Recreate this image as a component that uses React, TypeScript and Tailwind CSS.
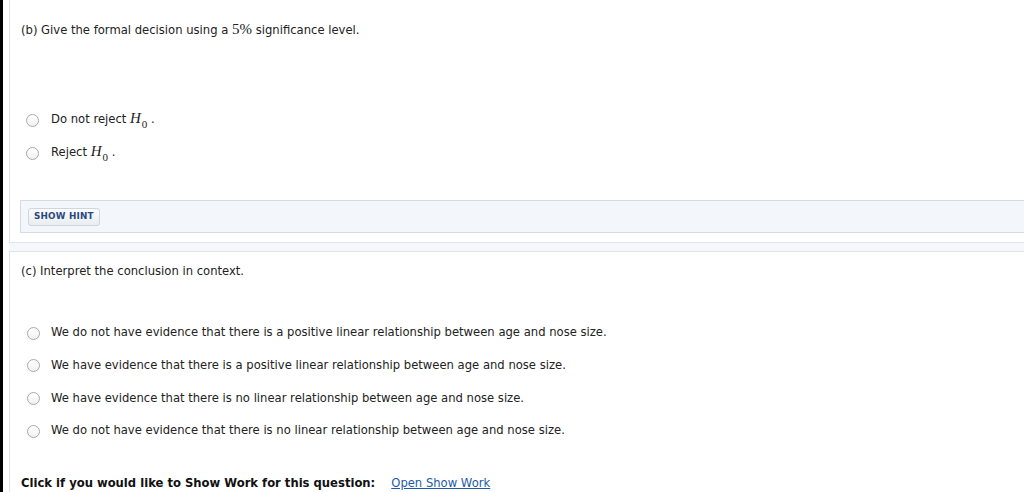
import React from 'react'

const Radio = () => (
  <span className="inline-block w-[13px] h-[13px] rounded-full border border-[#a9a9a9] bg-gradient-to-b from-white to-[#f1f1f1] shrink-0" />
)

const H0 = () => (
  <span className="font-['Liberation_Serif',serif] text-[15px] italic leading-none">
    H<sub className="not-italic text-[11px] align-[-2px] ml-[1px]">0</sub>
  </span>
)

const decisionOptions = ['Do not reject', 'Reject']

const conclusionOptions = [
  'We do not have evidence that there is a positive linear relationship between age and nose size.',
  'We have evidence that there is a positive linear relationship between age and nose size.',
  'We have evidence that there is no linear relationship between age and nose size.',
  'We do not have evidence that there is no linear relationship between age and nose size.',
]

const App = () => {
  return (
    <div className="flex w-[1024px] h-[492px] overflow-hidden bg-white text-[#222] font-['DejaVu_Sans',Verdana,sans-serif] text-[11.6px]">
      <div className="w-[3px] bg-black shrink-0" />
      <div className="flex-1 pl-[6px] flex flex-col">
        {/* part (b) */}
        <div className="border-l border-b border-[#dfe4ea] h-[243px] flex flex-col">
          <p className="pl-[11px] pt-[20px] leading-[18px]">
            (b) Give the formal decision using a{' '}
            <span className="font-['Liberation_Serif',serif] text-[15px]">5%</span> significance level.
          </p>
          <div className="flex flex-col gap-[17px] pl-[16px] mt-[73px]">
            {decisionOptions.map((label) => (
              <label key={label} className="flex items-center gap-[12px] h-[16px]">
                <Radio />
                <span>
                  {label} <H0 /> .
                </span>
              </label>
            ))}
          </div>
          <div className="ml-[10px] mt-[39px] h-[33px] bg-[#f3f6fa] border-y border-l border-[#d3dbe5] flex items-center pl-[7px]">
            <button className="h-[18px] px-[5px] rounded-[3px] border border-[#cfd6df] bg-gradient-to-b from-[#fafbfc] to-[#e9edf2] text-[#2b4a7e] font-bold text-[8.8px] tracking-[0.2px]">
              SHOW HINT
            </button>
          </div>
        </div>
        <div className="h-[8px] bg-[#f5f7fa]" />
        {/* part (c) */}
        <div className="border-l border-t border-[#dfe4ea] flex-1 flex flex-col">
          <p className="pl-[11px] pt-[10px] leading-[18px]">(c) Interpret the conclusion in context.</p>
          <div className="flex flex-col gap-[15.7px] pl-[17px] mt-[45px]">
            {conclusionOptions.map((label) => (
              <label key={label} className="flex items-center gap-[11px] h-[17px]">
                <Radio />
                <span>{label}</span>
              </label>
            ))}
          </div>
          <div className="pl-[11px] mt-[35px] flex items-center gap-[16px]">
            <span className="font-bold text-[#111]">Click if you would like to Show Work for this question:</span>
            <a href="#" className="text-[#1f5aa6] underline">Open Show Work</a>
          </div>
        </div>
      </div>
    </div>
  )
}

export default App
